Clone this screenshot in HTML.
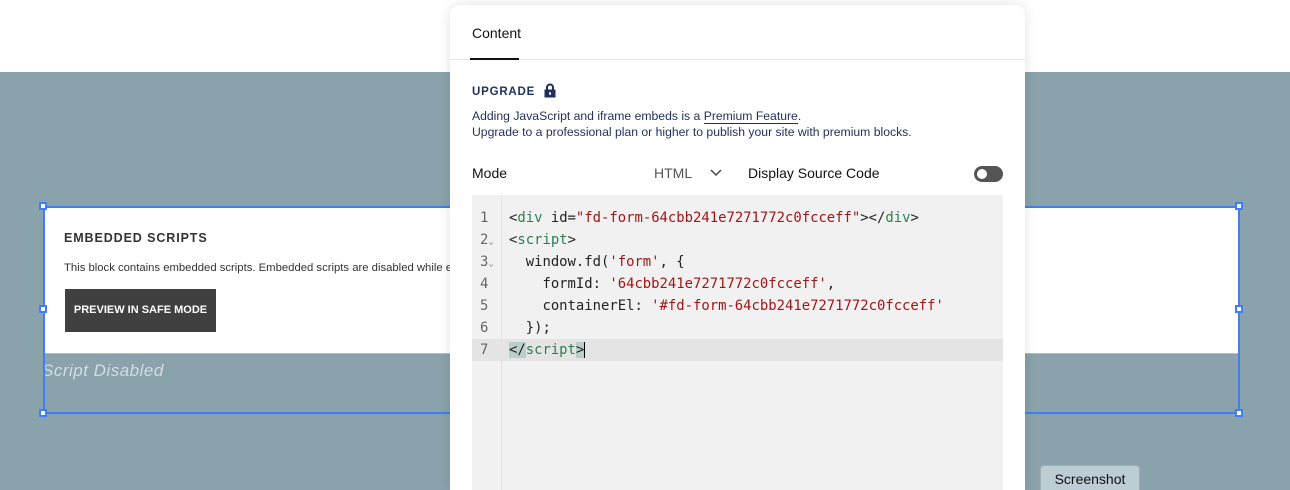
<!DOCTYPE html>
<html style="width:1290px;height:490px;overflow:hidden"><head><style>
*{margin:0;padding:0;box-sizing:border-box}
body{width:1290px;height:490px;overflow:hidden;background:#8aa2ab;font-family:"Liberation Sans",sans-serif;position:relative}
.top{position:absolute;left:0;top:0;width:1290px;height:72px;background:#fff}
.card{position:absolute;left:43px;top:207px;width:1196px;height:147px;background:#fff;border-bottom:1px solid #bbb}
.sel{position:absolute;left:43px;top:206px;width:1197px;height:208px;border:2px solid #3f7ef5}
.h{position:absolute;width:8px;height:8px;background:#fff;border:2px solid #3f7ef5}
.panel{position:absolute;left:450px;top:5px;width:575px;height:485px;background:#fff;border-radius:10px 10px 0 0;box-shadow:0 0 12px rgba(0,0,0,.12);overflow:hidden}
.abs{position:absolute}
.code{position:absolute;left:22px;top:190px;width:531px;height:310px;background:#f1f1f1;font-family:"DejaVu Sans Mono","Liberation Mono",monospace;font-size:13.9px;color:#222}
.ln{position:absolute;left:0;width:30px;height:300px;border-right:1px solid #e2e2e2}
.row{position:absolute;left:0;width:531px;height:22px;line-height:22px;white-space:pre}
.n{position:absolute;left:8px;color:#666}
.t{position:absolute;left:37px}
.g{color:#2e7d4f}.r{color:#a31515}
</style></head><body>
<div class="top"></div>
<div class="card">
 <div class="abs" style="left:21px;top:24px;font-size:12.5px;font-weight:bold;letter-spacing:.9px;color:#333">EMBEDDED SCRIPTS</div>
 <div class="abs" style="left:21px;top:55px;font-size:11.3px;color:#333;white-space:nowrap">This block contains embedded scripts. Embedded scripts are disabled while editing.</div>
 <div class="abs" style="left:22px;top:82px;width:151px;height:43px;background:#404040;color:#fff;font-size:11px;font-weight:bold;line-height:43px;text-align:center">PREVIEW IN SAFE MODE</div>
</div>
<div class="abs" style="left:42px;top:361px;font-size:17px;font-style:italic;color:#d4dde0;letter-spacing:.5px">Script Disabled</div>
<div class="sel"></div>
<div class="h" style="left:39px;top:202px"></div><div class="h" style="left:39px;top:305px"></div><div class="h" style="left:39px;top:409px"></div>
<div class="h" style="left:1235px;top:202px"></div><div class="h" style="left:1235px;top:305px"></div><div class="h" style="left:1235px;top:409px"></div>
<div class="abs" style="left:1040px;top:465px;width:100px;height:30px;background:#bccdd4;border:1px solid #9fb0b6;border-radius:4px;font-size:14px;color:#111;text-align:center;line-height:26px">Screenshot</div>
<div class="panel">
 <div class="abs" style="left:22px;top:20px;font-size:14px;color:#111">Content</div>
 <div class="abs" style="left:0;top:54px;width:575px;height:1px;background:#e4e4e4"></div>
 <div class="abs" style="left:20px;top:53px;width:49px;height:2px;background:#111"></div>
 <div class="abs" style="left:22px;top:81px;font-size:11.5px;font-weight:bold;letter-spacing:.8px;color:#1f2f5c">UPGRADE</div>
 <svg class="abs" style="left:94px;top:78px" width="12" height="15" viewBox="0 0 12 15"><path d="M3 7V4.5a3 3 0 0 1 6 0V7" fill="none" stroke="#1f2f5c" stroke-width="2"/><rect x="0.5" y="6.5" width="11" height="8" fill="#1f2f5c"/><rect x="5.2" y="9" width="1.6" height="3" fill="#fff"/></svg>
 <div class="abs" style="left:22px;top:103px;font-size:12.2px;line-height:16px;color:#1f2f5c;white-space:nowrap">Adding JavaScript and iframe embeds is a <span style="border-bottom:1px solid #1f2f5c">Premium Feature</span>.<br>Upgrade to a professional plan or higher to publish your site with premium blocks.</div>
 <div class="abs" style="left:22px;top:160px;font-size:14px;color:#111">Mode</div>
 <div class="abs" style="left:204px;top:160px;font-size:14px;color:#555">HTML</div>
 <svg class="abs" style="left:260px;top:164px" width="12" height="8"><path d="M1 1l5 5 5-5" fill="none" stroke="#444" stroke-width="1.5"/></svg>
 <div class="abs" style="left:298px;top:160px;font-size:14px;color:#111">Display Source Code</div>
 <div class="abs" style="left:524px;top:161px;width:29px;height:16px;border-radius:8px;background:#555"><div style="position:absolute;left:3px;top:3px;width:10px;height:10px;border-radius:50%;background:#fff"></div></div>
 <div class="code">
  <div class="ln"></div>
  <div class="row" style="top:144px;background:#e4e4e4"></div>
  <div class="row" style="top:12px"><span class="n">1</span><span class="t">&lt;<span class="g">div</span> id=<span class="r">"fd-form-64cbb241e7271772c0fcceff"</span>&gt;&lt;/<span class="g">div</span>&gt;</span></div>
  <div class="row" style="top:34px"><span class="n">2<small style="font-size:9px;color:#888">⌄</small></span><span class="t">&lt;<span class="g">script</span>&gt;</span></div>
  <div class="row" style="top:56px"><span class="n">3<small style="font-size:9px;color:#888">⌄</small></span><span class="t">  window.fd(<span class="r">'form'</span>, {</span></div>
  <div class="row" style="top:78px"><span class="n">4</span><span class="t">    formId: <span class="r">'64cbb241e7271772c0fcceff'</span>,</span></div>
  <div class="row" style="top:100px"><span class="n">5</span><span class="t">    containerEl: <span class="r">'#fd-form-64cbb241e7271772c0fcceff'</span></span></div>
  <div class="row" style="top:122px"><span class="n">6</span><span class="t">  });</span></div>
  <div class="row" style="top:144px"><span class="n">7</span><span class="t"><span style="background:#b9cfcb">&lt;/</span><span class="g">script</span><span style="background:#b9cfcb">&gt;</span><span style="border-left:1px solid #000"></span></span></div>
 </div>
</div>
</body></html>
